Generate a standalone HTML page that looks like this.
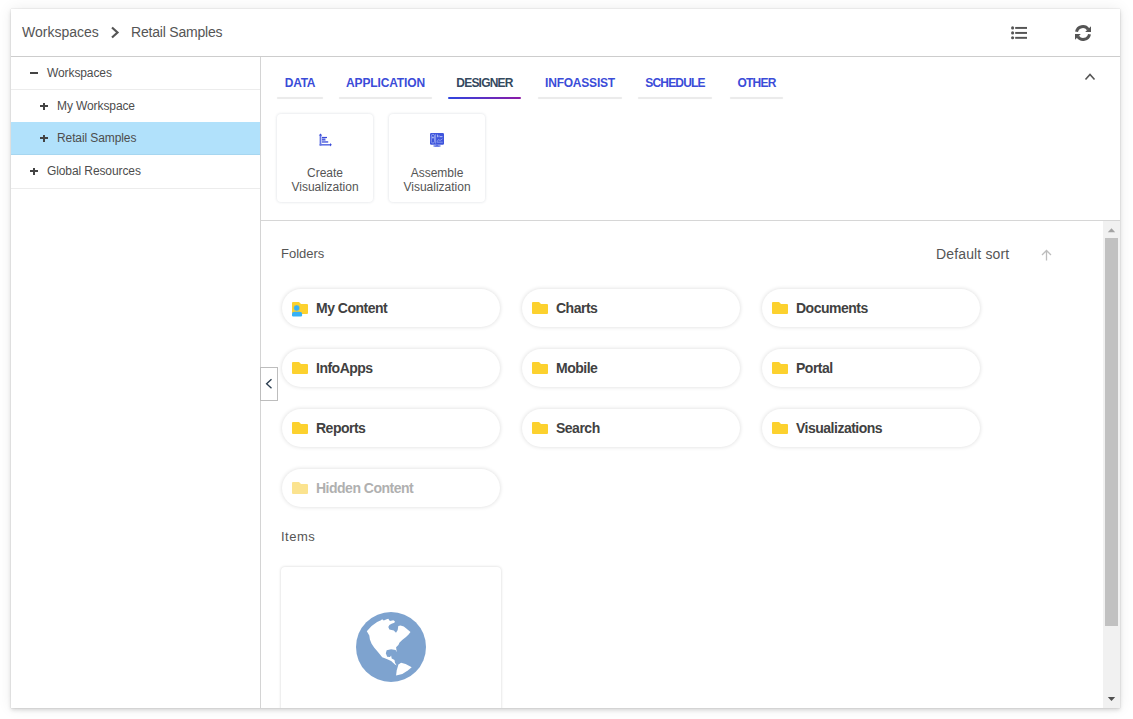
<!DOCTYPE html>
<html><head><meta charset="utf-8">
<style>
*{box-sizing:border-box;margin:0;padding:0}
html,body{width:1133px;height:719px;overflow:hidden;background:#fff;font-family:"Liberation Sans",sans-serif}
.a{position:absolute;white-space:nowrap}
.card{position:absolute;left:11px;top:9px;width:1109px;height:699px;background:#fff;box-shadow:0 0 1px rgba(0,0,0,.22),0 2px 4px rgba(0,0,0,.14),0 0 14px rgba(0,0,0,.08)}
.hl{position:absolute;height:1px}
.tree{font-size:12px;color:#4d4d4d;line-height:12px;letter-spacing:-0.1px}
.tab{position:absolute;top:77px;font-weight:bold;font-size:12px;line-height:12px;color:#3b4cd8;text-align:center}
.tu{position:absolute;top:97px;height:2px;background:#ebebeb;border-radius:1px;box-shadow:0 0 1px rgba(0,0,0,.06)}
.tile{position:absolute;top:114px;width:96px;height:88px;border-radius:4px;box-shadow:0 0 3px rgba(30,50,70,.17);background:#fff}
.tt{position:absolute;left:0;width:96px;text-align:center;font-size:12px;line-height:14px;color:#555;white-space:nowrap}
.pill{position:absolute;width:218.5px;height:38px;border-radius:19px;box-shadow:0 0 4px 0 rgba(0,0,0,.15);background:#fff}
.pt{position:absolute;left:34.5px;top:0;line-height:38px;font-weight:bold;font-size:14px;letter-spacing:-0.5px;color:#414141;white-space:nowrap}
.fd{position:absolute;left:10.5px;top:13px;overflow:visible}
</style></head><body>
<div class="card"></div>

<!-- header -->
<div class="hl" style="left:11px;top:56px;width:1109px;background:#cdcdcd"></div>
<div class="a" style="left:22px;top:25px;font-size:14px;line-height:14px;color:#555">Workspaces</div>
<svg class="a" style="left:109px;top:26px" width="12" height="13" viewBox="0 0 12 13"><path d="M3 1.5 L8.5 6.5 L3 11.5" fill="none" stroke="#555" stroke-width="2.2"/></svg>
<div class="a" style="left:131px;top:25px;font-size:14px;line-height:14px;color:#555;letter-spacing:-0.2px">Retail Samples</div>

<svg class="a" style="left:1010px;top:25px" width="18" height="16" viewBox="0 0 18 16">
<g fill="#555"><circle cx="2.6" cy="2.9" r="1.55"/><circle cx="2.6" cy="7.9" r="1.55"/><circle cx="2.6" cy="12.8" r="1.55"/>
<rect x="5.2" y="1.95" width="11.8" height="1.95"/><rect x="5.2" y="6.95" width="11.8" height="1.95"/><rect x="5.2" y="11.85" width="11.8" height="1.95"/></g></svg>
<svg class="a" style="left:1075px;top:25px" width="16" height="16" viewBox="0 0 16 16"><g fill="none" stroke="#555" stroke-width="3"><path d="M1.5 6.8 A6.5 6.5 0 0 1 13.2 4.4"/><path d="M14.5 9.2 A6.5 6.5 0 0 1 2.8 11.6"/></g><g fill="#555"><path d="M16 1.2 L16 6.9 L10.2 6.9Z"/><path d="M0 9.1 L5.8 9.1 L0 14.8Z"/></g></svg>

<!-- sidebar -->
<div class="a" style="left:260px;top:57px;width:1px;height:651px;background:#d4d4d4"></div>
<div class="hl" style="left:11px;top:89px;width:249px;background:#ececec"></div>
<div class="a" style="left:11px;top:122px;width:249px;height:33px;background:#b1e1fb"></div>
<div class="hl" style="left:11px;top:154px;width:249px;background:#a6d6f0"></div>
<div class="hl" style="left:11px;top:188px;width:249px;background:#ececec"></div>

<div class="a" style="left:30px;top:72px;width:8px;height:2px;background:#444"></div>
<div class="a tree" style="left:47px;top:67px">Workspaces</div>
<div class="a" style="left:40px;top:105px;width:8px;height:2px;background:#444"></div><div class="a" style="left:43px;top:102.5px;width:2px;height:7px;background:#444"></div>
<div class="a tree" style="left:57px;top:100px">My Workspace</div>
<div class="a" style="left:40px;top:137px;width:8px;height:2px;background:#444"></div><div class="a" style="left:43px;top:134.5px;width:2px;height:7px;background:#444"></div>
<div class="a tree" style="left:57px;top:132px">Retail Samples</div>
<div class="a" style="left:30px;top:170px;width:8px;height:2px;background:#444"></div><div class="a" style="left:33px;top:167.5px;width:2px;height:7px;background:#444"></div>
<div class="a tree" style="left:47px;top:165px">Global Resources</div>

<!-- tabs -->
<div class="tab" style="left:277px;width:46px;letter-spacing:-0.27px">DATA</div><div class="tu" style="left:277px;width:46px"></div>
<div class="tab" style="left:339px;width:93px;letter-spacing:-0.13px">APPLICATION</div><div class="tu" style="left:339px;width:93px"></div>
<div class="tab" style="left:448px;width:73px;color:#34495e;letter-spacing:-0.79px">DESIGNER</div><div class="tu" style="left:448px;width:73px;height:2px;background:linear-gradient(90deg,#2e45e0,#8c1aa6)"></div>
<div class="tab" style="left:538px;width:84px;letter-spacing:-0.21px">INFOASSIST</div><div class="tu" style="left:538px;width:84px"></div>
<div class="tab" style="left:638px;width:74px;letter-spacing:-0.81px">SCHEDULE</div><div class="tu" style="left:638px;width:74px"></div>
<div class="tab" style="left:730px;width:53px;letter-spacing:-0.75px">OTHER</div><div class="tu" style="left:730px;width:53px"></div>
<svg class="a" style="left:1084px;top:72px" width="12" height="9" viewBox="0 0 12 9"><path d="M1.5 7.5 L6 2.5 L10.5 7.5" fill="none" stroke="#555" stroke-width="1.6"/></svg>

<div class="tile" style="left:277px">
  <svg class="a" style="left:41px;top:19px" width="14" height="14" viewBox="0 0 14 14"><g fill="#6576e4"><rect x="1.6" y="1.8" width="1.8" height="10.8"/><rect x="1.6" y="11" width="10.8" height="1.6"/></g><g fill="#3a4bd8"><rect x="4" y="3.9" width="5" height="1.2"/><rect x="4" y="6.1" width="3.4" height="1.0"/><rect x="4" y="8.3" width="6.2" height="1.3"/><path d="M0.8 2.6 L2.5 0.6 L4.2 2.6Z"/><path d="M12 10 L13.8 11.8 L12 13.6Z"/></g><g fill="#8d99ec"><rect x="4" y="5.1" width="3.5" height="1"/><rect x="4" y="7.1" width="3.5" height="1.2"/></g></svg>
  <div class="tt" style="top:52px">Create<br>Visualization</div>
</div>
<div class="tile" style="left:389px">
  <svg class="a" style="left:41px;top:19px" width="15" height="15" viewBox="0 0 15 15"><rect x="0" y="0" width="14" height="11.7" rx="1.2" fill="#3f55dc"/><ellipse cx="7" cy="13" rx="3.8" ry="1" fill="#6f82e6"/><rect x="6" y="11.5" width="2" height="1.5" fill="#5b70e2"/>
<g fill="none" stroke="#a8b6f3" stroke-width="0.7"><rect x="1.3" y="1.3" width="3.2" height="8.8" rx="1.6"/><path d="M5.6 1.2 V10.5"/><path d="M6.8 9.2 H12.7 M7 8.8 L8.5 6.5 L10 7.5 L12.5 5.8"/></g>
<g fill="#a8b6f3"><rect x="7" y="1.6" width="1" height="2.6"/><rect x="8.5" y="2.4" width="1" height="1.8"/><rect x="10" y="3" width="2.5" height="1.2"/><circle cx="2.9" cy="4.5" r="1"/></g></svg>
  <div class="tt" style="top:52px">Assemble<br>Visualization</div>
</div>
<div class="hl" style="left:261px;top:220px;width:859px;background:#d6d6d6"></div>

<!-- collapse button -->
<div class="a" style="left:260px;top:367px;width:18px;height:34px;border:1px solid #bdbdbd;background:#fff"></div>
<svg class="a" style="left:264px;top:377px" width="10" height="13" viewBox="0 0 10 13"><path d="M7.5 2.3 L2.6 6.8 L7.5 11.3" fill="none" stroke="#2c3e50" stroke-width="1.35"/></svg>

<!-- content -->
<div class="a" style="left:281px;top:247px;font-size:13px;line-height:13px;color:#555">Folders</div>
<div class="a" style="left:936px;top:247px;font-size:14px;line-height:14px;color:#555;letter-spacing:0.15px">Default sort</div>
<svg class="a" style="left:1040px;top:249px" width="13" height="12" viewBox="0 0 13 12"><path d="M6.5 11.5 V1.5 M2 6 L6.5 1.5 L11 6" fill="none" stroke="#bdbdbd" stroke-width="1.3"/></svg>

<div class="pill" style="left:281.5px;top:289px"><svg class="fd" width="16" height="17" viewBox="0 0 16 17"><path fill="#fcd12e" d="M0 1 Q0 0 1 0 L7 0 L9 2 L15 2 Q16 2 16 3 L16 11 Q16 12 15 12 L1 12 Q0 12 0 11Z"/><circle cx="4.7" cy="6" r="3" fill="#36b1f7" stroke="#fcd12e" stroke-width="0.4"/><path fill="#36b1f7" d="M0 11.8 Q0 9.8 2.5 9.8 L7.6 9.8 Q10.1 9.8 10.1 11.8 L10.1 13.6 Q10.1 14.4 9.3 14.4 L0.8 14.4 Q0 14.4 0 13.6Z"/></svg><div class="pt" style="color:#414141">My Content</div></div>
<div class="pill" style="left:521.5px;top:289px"><svg class="fd" width="16" height="17" viewBox="0 0 16 17"><path fill="#fcd12e" d="M0 1 Q0 0 1 0 L7 0 L9 2 L15 2 Q16 2 16 3 L16 11 Q16 12 15 12 L1 12 Q0 12 0 11Z"/></svg><div class="pt" style="color:#414141">Charts</div></div>
<div class="pill" style="left:761.5px;top:289px"><svg class="fd" width="16" height="17" viewBox="0 0 16 17"><path fill="#fcd12e" d="M0 1 Q0 0 1 0 L7 0 L9 2 L15 2 Q16 2 16 3 L16 11 Q16 12 15 12 L1 12 Q0 12 0 11Z"/></svg><div class="pt" style="color:#414141">Documents</div></div>
<div class="pill" style="left:281.5px;top:349px"><svg class="fd" width="16" height="17" viewBox="0 0 16 17"><path fill="#fcd12e" d="M0 1 Q0 0 1 0 L7 0 L9 2 L15 2 Q16 2 16 3 L16 11 Q16 12 15 12 L1 12 Q0 12 0 11Z"/></svg><div class="pt" style="color:#414141">InfoApps</div></div>
<div class="pill" style="left:521.5px;top:349px"><svg class="fd" width="16" height="17" viewBox="0 0 16 17"><path fill="#fcd12e" d="M0 1 Q0 0 1 0 L7 0 L9 2 L15 2 Q16 2 16 3 L16 11 Q16 12 15 12 L1 12 Q0 12 0 11Z"/></svg><div class="pt" style="color:#414141">Mobile</div></div>
<div class="pill" style="left:761.5px;top:349px"><svg class="fd" width="16" height="17" viewBox="0 0 16 17"><path fill="#fcd12e" d="M0 1 Q0 0 1 0 L7 0 L9 2 L15 2 Q16 2 16 3 L16 11 Q16 12 15 12 L1 12 Q0 12 0 11Z"/></svg><div class="pt" style="color:#414141">Portal</div></div>
<div class="pill" style="left:281.5px;top:409px"><svg class="fd" width="16" height="17" viewBox="0 0 16 17"><path fill="#fcd12e" d="M0 1 Q0 0 1 0 L7 0 L9 2 L15 2 Q16 2 16 3 L16 11 Q16 12 15 12 L1 12 Q0 12 0 11Z"/></svg><div class="pt" style="color:#414141">Reports</div></div>
<div class="pill" style="left:521.5px;top:409px"><svg class="fd" width="16" height="17" viewBox="0 0 16 17"><path fill="#fcd12e" d="M0 1 Q0 0 1 0 L7 0 L9 2 L15 2 Q16 2 16 3 L16 11 Q16 12 15 12 L1 12 Q0 12 0 11Z"/></svg><div class="pt" style="color:#414141">Search</div></div>
<div class="pill" style="left:761.5px;top:409px"><svg class="fd" width="16" height="17" viewBox="0 0 16 17"><path fill="#fcd12e" d="M0 1 Q0 0 1 0 L7 0 L9 2 L15 2 Q16 2 16 3 L16 11 Q16 12 15 12 L1 12 Q0 12 0 11Z"/></svg><div class="pt" style="color:#414141">Visualizations</div></div>
<div class="pill" style="left:281.5px;top:469px"><svg class="fd" width="16" height="12" viewBox="0 0 16 12"><path fill="#fbe38f" d="M0 1 Q0 0 1 0 L7 0 L9 2 L15 2 Q16 2 16 3 L16 11 Q16 12 15 12 L1 12 Q0 12 0 11Z"/></svg><div class="pt" style="color:#b0b0b0">Hidden Content</div></div>


<div class="a" style="left:281px;top:530px;font-size:13px;line-height:13px;color:#555;letter-spacing:0.5px">Items</div>
<div class="a" style="left:261px;top:221px;width:843px;height:487px;overflow:hidden"><div class="a" style="left:20px;top:346px;width:220px;height:200px;border-radius:4px;box-shadow:0 0 3px rgba(0,0,0,.18);background:#fff"></div></div>
<svg class="a" style="left:356px;top:612px" width="70" height="70" viewBox="0 0 70 70"><circle cx="35" cy="35" r="35" fill="#7ea3cf"/><path fill="#fff" d="M10.8 19.3 L15.6 14.0 L21.1 10.1 L25.0 8.2 L26.1 7.3 L27.8 8.5 L30.6 7.3 L32.3 6.8 L33.9 9.0 L37.3 8.2 L38.9 9.3 L38.4 10.7 L35.6 11.8 L33.4 12.9 L32.3 15.1 L33.4 17.4 L37.8 18.5 L40.0 20.7 L41.7 17.9 L42.3 14.0 L44.5 13.5 L47.8 14.6 L50.0 16.2 L54.5 20.0 L52.6 22.5 L50.0 25.1 L46.2 27.9 L43.4 30.7 L42.4 33.0 L40.1 35.2 L40.7 40.2 L39.6 38.0 L35.1 37.2 L30.7 38.3 L29.8 41.3 L31.2 44.7 L34.0 45.0 L35.1 43.6 L35.7 46.4 L38.5 48.0 L39.0 50.8 L40.7 53.6 L39.0 52.5 L35.1 49.1 L30.7 46.9 L26.2 45.2 L24.0 42.5 L21.1 39.0 L18.3 35.7 L15.6 31.8 L13.9 27.4 L13.3 23.5Z"/><path fill="#fff" d="M40.1 63.6 L40.7 58.6 L42.4 52.5 L45.1 50.8 L49.6 51.9 L55.7 55.3 L51.8 58.6 L46.3 61.9Z"/></svg>

<!-- scrollbar -->
<div class="a" style="left:1103px;top:221px;width:17px;height:487px;background:#f1f1f1"></div>
<div class="a" style="left:1105px;top:238px;width:13px;height:388px;background:#c1c1c1"></div>
<svg class="a" style="left:1103px;top:221px" width="17" height="17" viewBox="0 0 17 17"><path d="M4.8 11.2 L8.5 7.2 L12.2 11.2Z" fill="#a3a3a3"/></svg>
<svg class="a" style="left:1103px;top:691px" width="17" height="17" viewBox="0 0 17 17"><path d="M4.8 6 L8.5 10 L12.2 6Z" fill="#505050"/></svg>


</body></html>
